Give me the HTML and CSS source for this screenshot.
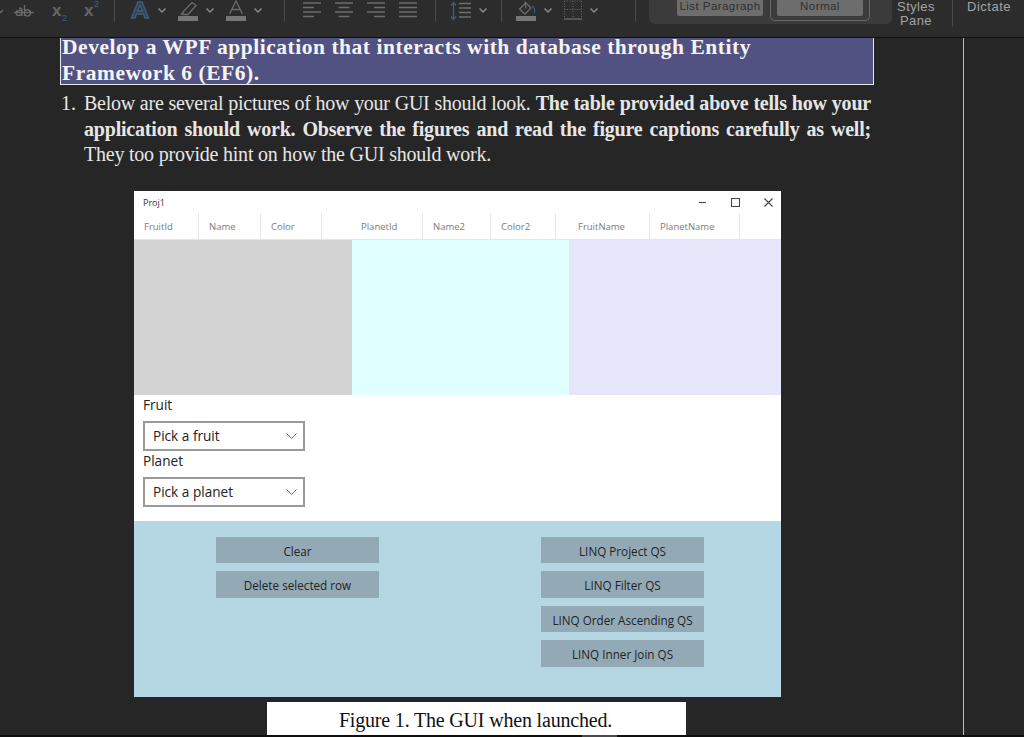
FILE: index.html
```html
<!DOCTYPE html>
<html lang="en">
<head>
<meta charset="utf-8">
<title>Proj1 document</title>
<link rel="stylesheet" href="styles.css">
</head>
<body>
<div class="page">
  <header class="ribbon">
    <div class="group g1">
      <svg class="ico" width="3" height="22" viewBox="0 0 3 22"><path d="M-3 9l3.500 3.500L3 10" class="ln"/></svg>
      <svg class="ico" width="20" height="22" viewBox="0 0 20 22"><path d="M0 12.500h20" class="ln"/><path d="M5 8c2 0 3 1 3 2.500V16M8 11c-1-1-6-1-6 2 0 3 5 3 6 .5M10.500 5v11M10.500 11c2-2 6-1.500 6 2s-4 4-6 1.500" class="ln"/></svg>
      <span class="sub">x<i class="s2">2</i></span>
      <span class="sup">x<i class="s1">2</i></span>
    </div>
    <div class="group g2">
      <span class="pair">
        <svg class="ico" width="20" height="22" viewBox="0 0 20 22"><path d="M1.500 18L8 2h4l6.500 16h-3.500l-1.500-4h-7L5 18zM7.500 11h5L10 5z" fill="#3a3f45" stroke="#3f5f80" stroke-width="1.400"/></svg>
        <svg class="chev" width="8" height="22" viewBox="0 0 8 22"><path d="M.5 8.500l3.500 3.500 3.500-3.500"/></svg>
      </span>
      <span class="pair">
        <svg class="ico" width="20" height="22" viewBox="0 0 20 22"><path d="M5 12L14 2.500l4 3-8 9H5zM3 15l2-3" class="ln"/><rect y="16" width="20" height="5" fill="#777"/></svg>
        <svg class="chev" width="8" height="22" viewBox="0 0 8 22"><path d="M.5 8.500l3.500 3.500 3.500-3.500"/></svg>
      </span>
      <span class="pair">
        <svg class="ico" width="20" height="22" viewBox="0 0 20 22"><path d="M3.500 14L10 1l6.500 13M6 9.500h8" class="ln"/><rect y="16" width="20" height="5" fill="#777"/></svg>
        <svg class="chev" width="8" height="22" viewBox="0 0 8 22"><path d="M.5 8.500l3.500 3.500 3.500-3.500"/></svg>
      </span>
    </div>
    <div class="group g3">
      <svg class="ico" width="18" height="22" viewBox="0 0 18 22"><path d="M0 3h18M0 7.500h11M0 12h18M0 16.500h11" class="ln"/></svg>
      <svg class="ico" width="18" height="22" viewBox="0 0 18 22"><path d="M0 3h18M3.500 7.500h11M0 12h18M3.500 16.500h11" class="ln"/></svg>
      <svg class="ico" width="18" height="22" viewBox="0 0 18 22"><path d="M0 3h18M7 7.500h11M0 12h18M7 16.500h11" class="ln"/></svg>
      <svg class="ico" width="18" height="22" viewBox="0 0 18 22"><path d="M0 3h18M0 7.500h18M0 12h18M0 16.500h18" class="ln"/></svg>
    </div>
    <div class="group g4">
      <span class="pair">
        <svg class="ico" width="21" height="22" viewBox="0 0 21 22"><path d="M3.500 3v16M1 5.500l2.500-3 2.500 3M1 16.500l2.500 3 2.500-3" fill="none" stroke="#3f5f80" stroke-width="1.200"/><path d="M9 3.500h12M9 8h12M9 12.500h12M9 17h12" class="ln"/></svg>
        <svg class="chev" width="8" height="22" viewBox="0 0 8 22"><path d="M.5 8.500l3.500 3.500 3.500-3.500"/></svg>
      </span>
    </div>
    <div class="group g5">
      <span class="pair">
        <svg class="ico" width="20" height="22" viewBox="0 0 20 22"><path d="M3.500 9L10 3l5 5-6 6zM9 1.500l1 7" class="ln"/><path d="M16 6c2.500 1 3 3 2.500 7" fill="none" stroke="#3f5f80" stroke-width="1.200"/><rect y="16" width="20" height="5" fill="#777"/></svg>
        <svg class="chev" width="8" height="22" viewBox="0 0 8 22"><path d="M.5 8.500l3.500 3.500 3.500-3.500"/></svg>
      </span>
      <span class="pair">
        <svg class="ico" width="18" height="22" viewBox="0 0 18 22"><path d="M.5 1h17M.5 1v17M17.500 1v17M9 1v17M.5 9.500h17" fill="none" stroke="#666" stroke-dasharray="1 1.500"/><path d="M0 19h18" class="ln"/></svg>
        <svg class="chev" width="8" height="22" viewBox="0 0 8 22"><path d="M.5 8.500l3.500 3.500 3.500-3.500"/></svg>
      </span>
    </div>
    <div class="gallery">
      <span class="style-chip chip-list">List Paragraph</span>
      <span class="chip-frame"><span class="style-chip chip-normal">Normal</span></span>
    </div>
    <div class="tool tool-pane">Styles<br>Pane</div>
    <div class="tool tool-dictate">Dictate</div>
  </header>

  <main class="doc">
    <div class="sheet">
      <h1 class="banner"><span class="banner-text">Develop a WPF application that interacts with database through Entity<br>Framework 6 (EF6).</span></h1>
      <div class="item">
        <span class="num">1.</span>
        <p class="para">
          <span class="line"><span class="tighter">Below are several pictures of how your GUI should look.</span> <b>The table provided above tells how your</b></span>
          <span class="line"><b>application should work. Observe the figures and read the figure captions carefully as well;</b></span>
          <span class="line-last tight">They too provide hint on how the GUI should work.</span>
        </p>
      </div>

      <figure class="app">
        <div class="titlebar">
          <span class="app-name">Proj1</span>
          <span class="win">
            <svg width="9" height="9" viewBox="0 0 9 9"><path d="M1 4.500h7" class="w"/></svg>
            <svg width="9" height="9" viewBox="0 0 9 9"><rect x=".5" y=".5" width="8" height="8" class="w"/></svg>
            <svg width="9" height="9" viewBox="0 0 9 9"><path d="M.5.5l8 8M8.500.5l-8 8" class="w"/></svg>
          </span>
        </div>
        <div class="thead">
          <span class="th">FruitId</span>
          <span class="th th-b">Name</span>
          <span class="th th-b">Color</span>
          <span class="th th-p">PlanetId</span>
          <span class="th th-b">Name2</span>
          <span class="th th-b">Color2</span>
          <span class="th th-f">FruitName</span>
          <span class="th th-b">PlanetName</span>
          <span class="th-end"></span>
        </div>
        <div class="grids">
          <div class="pane pane-gray"></div>
          <div class="pane pane-cyan"></div>
          <div class="pane pane-lav"></div>
        </div>
        <div class="form">
          <div class="lbl">Fruit</div>
          <div class="combo"><span>Pick a fruit</span><svg width="11" height="6" viewBox="0 0 11 6"><path d="M.5.5l5 5 5-5"/></svg></div>
          <div class="lbl">Planet</div>
          <div class="combo"><span>Pick a planet</span><svg width="11" height="6" viewBox="0 0 11 6"><path d="M.5.5l5 5 5-5"/></svg></div>
        </div>
        <div class="actions">
          <div class="col">
            <div class="btn">Clear</div>
            <div class="btn">Delete selected row</div>
          </div>
          <div class="col">
            <div class="btn">LINQ Project QS</div>
            <div class="btn">LINQ Filter QS</div>
            <div class="btn">LINQ Order Ascending QS</div>
            <div class="btn">LINQ Inner Join QS</div>
          </div>
        </div>
      </figure>

      <figcaption class="caption">Figure 1. The GUI when launched.</figcaption>
    </div>
    <aside class="rail"></aside>
  </main>
  <footer class="status"><span class="status-tab"></span></footer>
</div>
</body>
</html>
```
FILE: styles.css
```css
* { box-sizing: border-box; }
html, body { margin: 0; height: 100%; background: #262626; }
.page { width: 1024px; height: 737px; display: flex; flex-direction: column; overflow: hidden; }

/* ribbon */
.ribbon { height: 38px; flex: none; display: flex; align-items: flex-start; background: #2c2c2c; border-bottom: 1px solid #0f0f0f; font-family: "Liberation Sans", sans-serif; }
.group { height: 22px; display: flex; align-items: center; border-right: 1px solid #4a4a4a; flex: none; }
.ico, .chev { display: block; flex: none; }
.ln { fill: none; stroke: #6c6c6c; stroke-width: 1.300; }
.chev path { fill: none; stroke: #8a8a8a; stroke-width: 1.500; }
.pair { display: flex; align-items: center; gap: 8px; }
.g1 { width: 115px; gap: 18px; }
.g1 .ico:first-child { margin-right: -7px; }
.sub, .sup { width: 14px; height: 22px; position: relative; font-size: 17px; font-weight: bold; color: #666; line-height: 22px; }
.sub i, .sup i { position: absolute; left: 10px; font-size: 9px; font-style: normal; font-weight: normal; color: #3f5f80; line-height: 9px; }
.s2 { top: 14px; }
.s1 { top: 0; }
.g2 { width: 170px; padding-left: 15px; gap: 12px; }
.g3 { width: 151px; padding-left: 18px; gap: 14px; }
.g4 { width: 66px; padding-left: 14px; }
.g5 { width: 134px; padding-left: 14px; gap: 12px; }
.gallery { width: 243px; height: 24px; margin-left: 13px; flex: none; display: flex; align-items: flex-start; background: #3b3b3b; border-radius: 0 0 6px 6px; padding-left: 28px; }
.style-chip { display: block; height: 16px; background: #6d6d6d; color: #303030; font-size: 11.500px; line-height: 13px; text-align: center; border-radius: 0 0 2px 2px; letter-spacing: .45px; }
.chip-list { width: 86px; }
.chip-frame { display: block; width: 100px; height: 21px; margin-left: 7px; border: 1px solid #6a6a6a; border-top: 0; border-radius: 0 0 5px 5px; padding: 0 6px; }
.chip-normal { width: 86px; }
.tool { color: #a3a3a3; font-size: 13px; text-align: center; flex: none; letter-spacing: .4px; }
.tool-pane { width: 61px; height: 27px; line-height: 14px; border-right: 1px solid #4a4a4a; padding-right: 12px; }
.tool-dictate { width: 72px; line-height: 13px; letter-spacing: .5px; }

/* document */
.doc { flex: 1; min-height: 0; display: flex; background: #262626; }
.sheet { width: 963px; flex: none; padding-left: 60px; display: flex; flex-direction: column; align-items: flex-start; overflow: hidden; }
.rail { flex: 1; border-left: 1px solid #bdbdbd; }
.banner { width: 814px; height: 47px; margin: 0; flex: none; padding: 0 1px; background: #525282; border: 1px solid #e8e8e8; border-top: 0; color: #f4f4f4; font: bold 21.500px/26px "Liberation Serif", serif; letter-spacing: .53px; overflow: hidden; }
.banner-text { display: block; margin-top: -4px; }
.item { display: flex; width: 811px; margin-top: 6px; color: #e6e6e6; font: 20px/25.500px "Liberation Serif", serif; }
.num { width: 24px; flex: none; padding-left: 1px; }
.para { margin: 0; flex: 1; }
.para b { letter-spacing: -.2px; }
.line { display: block; text-align: justify; text-align-last: justify; }
.line-last { display: block; }
.tight { letter-spacing: -.22px; }
.tighter { letter-spacing: -.26px; }

/* figure */
.app { width: 647px; height: 506px; margin: 23px 0 0 74px; flex: none; display: flex; flex-direction: column; background: #fff; font-family: "Open Sans", "Noto Sans", sans-serif; }
.titlebar { height: 22px; flex: none; display: flex; align-items: center; justify-content: space-between; padding: 1px 8px 0 9px; }
.app-name { font-size: 9px; color: #333; }
.win { display: flex; gap: 24px; }
.w { fill: none; stroke: #444; stroke-width: 1.100; }
.thead { height: 26px; flex: none; display: grid; grid-template-columns: 65px 62px 61px 101px 68px 65px 94px 90px 1fr; }
.th { font-size: 9.500px; line-height: 28px; color: #7b7b7b; padding-left: 10px; border-right: 1px solid #e6e6e6; height: 26px; }
.th-p { padding-left: 39px; }
.th-f { padding-left: 22px; }
.grids { height: 156px; flex: none; display: grid; grid-template-columns: 218px 217px 212px; border-top: 1px solid #e6e6e6; }
.pane-gray { background: #d3d3d3; }
.pane-cyan { background: #e0ffff; }
.pane-lav { background: #e6e6fa; }
.form { height: 126px; flex: none; padding: 0 0 0 9px; color: #222; font-size: 13.600px; }
.lbl { line-height: 20px; height: 26px; }
.combo { width: 162px; height: 30px; border: 2px solid #999; display: flex; align-items: center; justify-content: space-between; padding: 0 6px 0 8px; }
.combo path { fill: none; stroke: #666; stroke-width: 1; }
.actions { flex: 1; background: #b5d6e3; display: grid; grid-template-columns: 163px 163px; column-gap: 162px; padding: 16px 82px 0; }
.col { display: flex; flex-direction: column; gap: 8px; }
.btn { height: 26.500px; padding-top: 1px; background: #93aab6; color: #222; font-size: 11.700px; line-height: 26px; text-align: center; }

.caption { width: 419px; height: 33px; margin: 5px 0 0 207px; padding-right: 2px; flex: none; background: #fff; color: #111; font: 20px/36px "Liberation Serif", serif; text-align: center; letter-spacing: -.18px; }
.status { height: 2px; flex: none; background: #0f0f0f; position: relative; }
.status-tab { position: absolute; left: 582px; top: 0; width: 35px; height: 2px; background: #4a4a4a; }
```
